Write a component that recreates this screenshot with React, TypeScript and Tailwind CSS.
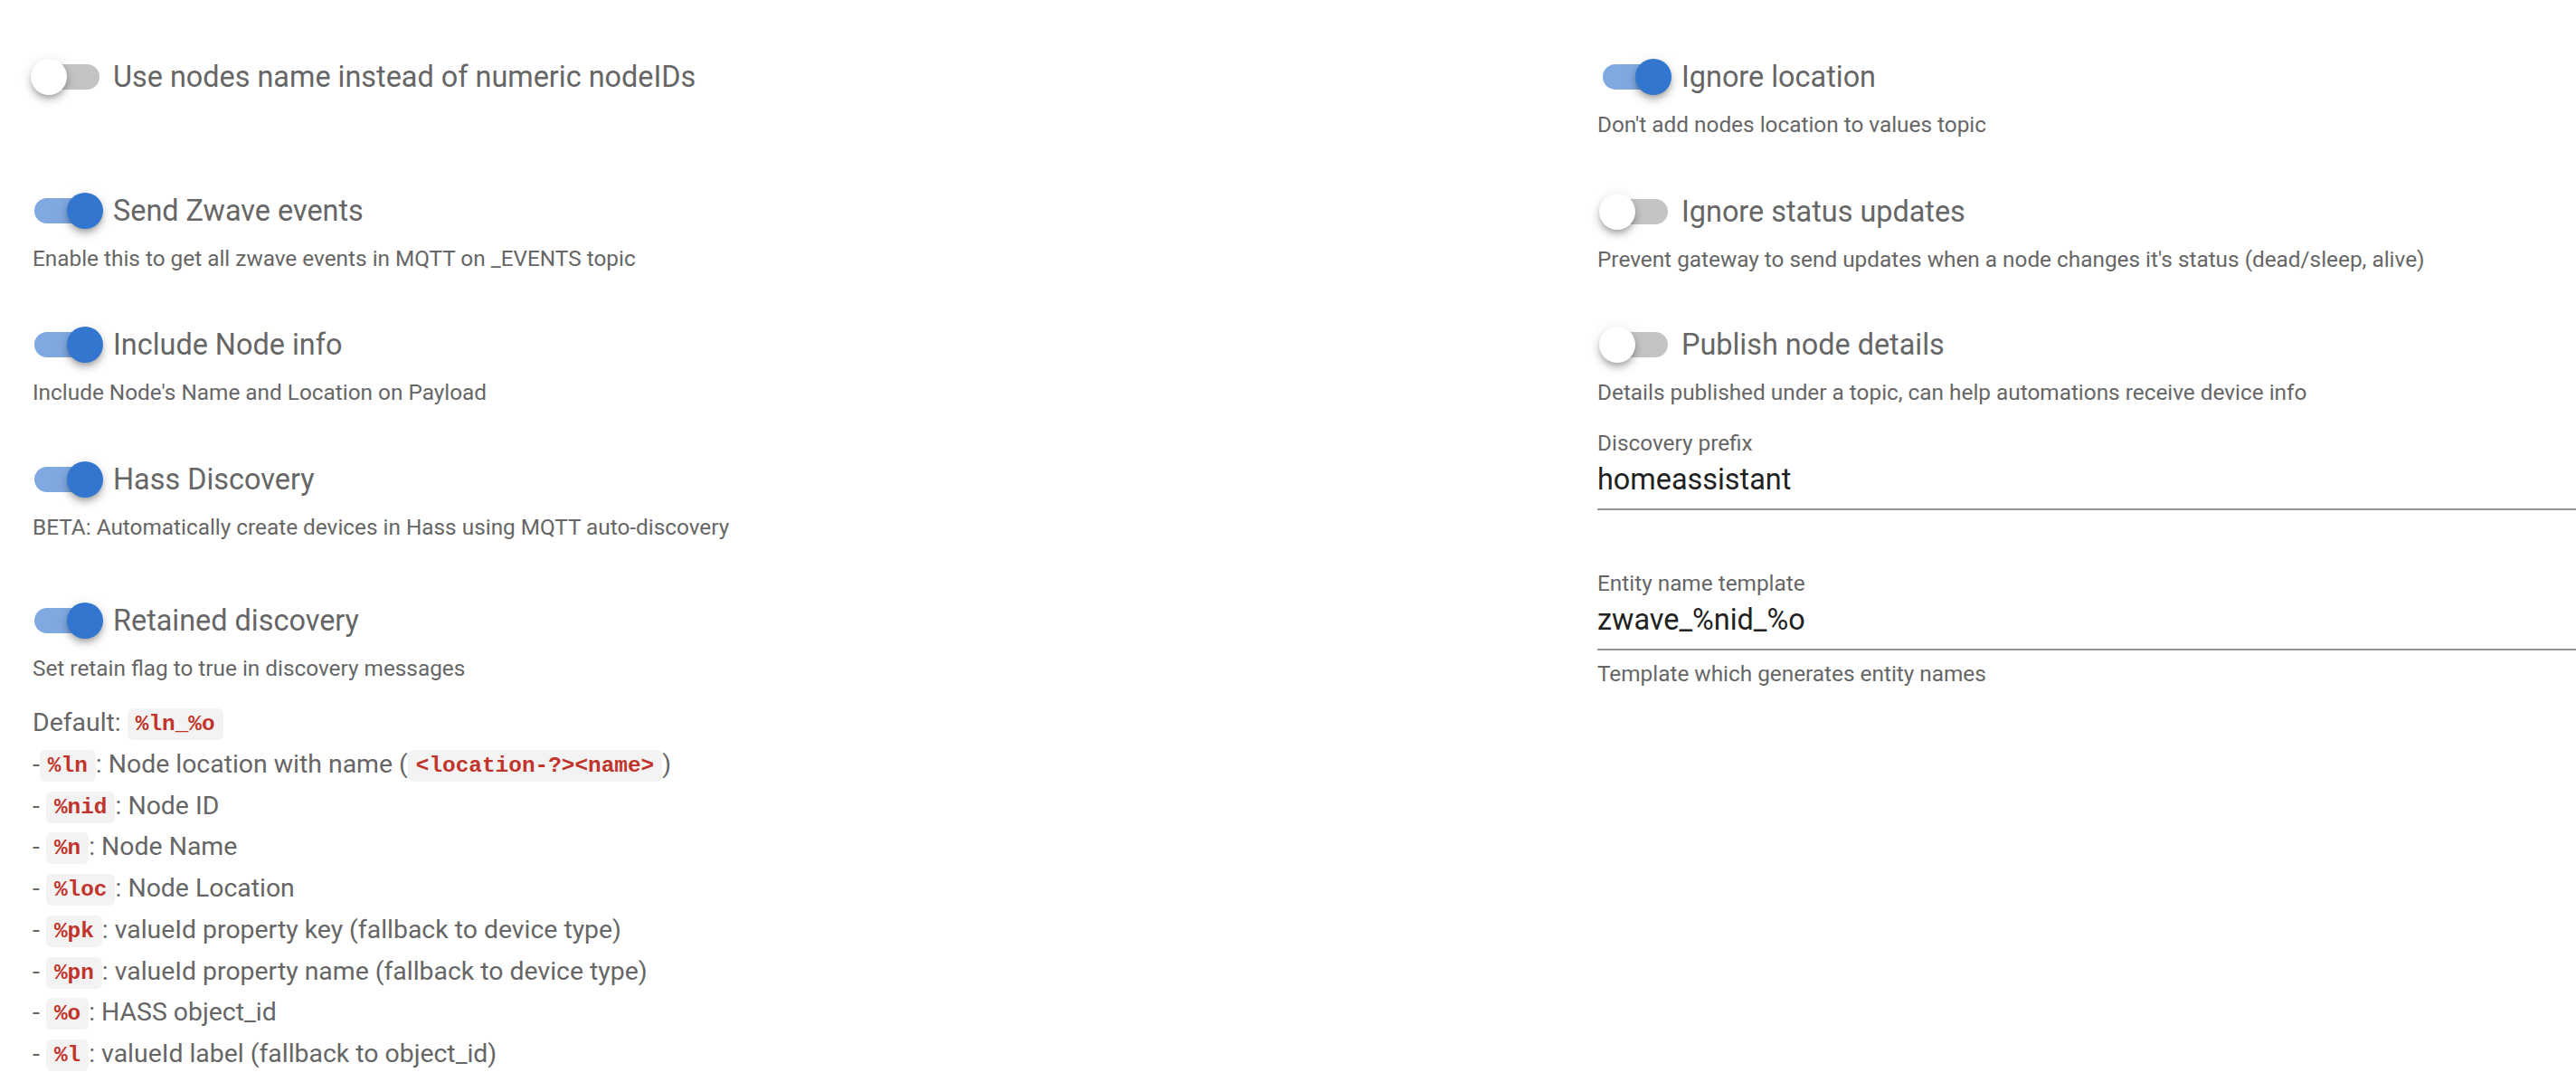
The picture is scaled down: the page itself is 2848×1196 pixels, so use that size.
import React from 'react';
import clsx from 'clsx';

const FONT = '[font-family:Roboto,"Liberation_Sans",sans-serif]';

function Toggle({ on }: { on: boolean }) {
  return (
    <div className="relative w-[80px] h-[40px] shrink-0">
      <div
        className={clsx(
          'absolute left-[4px] top-[6px] w-[72px] h-[28px] rounded-full',
          on ? 'bg-[#80a9e1]' : 'bg-[#c4c4c4]'
        )}
      />
      <div
        className={clsx(
          'absolute top-0 w-[40px] h-[40px] rounded-full shadow-[0_4px_6px_-2px_rgba(0,0,0,0.25),0_6px_10px_0_rgba(0,0,0,0.14),0_2px_14px_0_rgba(0,0,0,0.1)]',
          on ? 'left-[40px] bg-[#3276d0]' : 'left-0 bg-white'
        )}
      />
    </div>
  );
}

function SwitchRow({ on, label, className }: { on: boolean; label: string; className?: string }) {
  return (
    <div className={clsx('flex items-center h-[40px] -ml-[2px]', className)}>
      <Toggle on={on} />
      <span className="ml-[11px] text-[32.4px] leading-[40px] text-[#666666] whitespace-nowrap">{label}</span>
    </div>
  );
}

function Hint({ children }: { children: React.ReactNode }) {
  return <div className="mt-[17px] text-[24.35px] leading-[32px] text-[#666666] whitespace-nowrap">{children}</div>;
}

function Code({ children }: { children: React.ReactNode }) {
  return (
    <code className="inline-block bg-[#f3f3f3] text-[#c0342b] font-bold rounded-[6px] px-[9px] leading-[35px] text-[24.4px] align-middle [font-family:'Liberation_Mono',monospace]">
      {children}
    </code>
  );
}

const placeholders: [string, string][] = [
  ['%nid', 'Node ID'],
  ['%n', 'Node Name'],
  ['%loc', 'Node Location'],
  ['%pk', 'valueId property key (fallback to device type)'],
  ['%pn', 'valueId property name (fallback to device type)'],
  ['%o', 'HASS object_id'],
  ['%l', 'valueId label (fallback to object_id)'],
];

function Field({ label, value, className }: { label: string; value: string; className?: string }) {
  return (
    <div className={className}>
      <div className="text-[24.35px] leading-[32px] text-[#666666]">{label}</div>
      <div className="mt-[4px] text-[32.4px] leading-[40px] text-[#212121]">{value}</div>
      <div className="mt-[12px] h-[2px] bg-[#949494]" />
    </div>
  );
}

export default function App() {
  return (
    <div className={clsx('w-[2848px] h-[1196px] bg-white overflow-hidden grid grid-cols-[1730px_1fr]', FONT)}>
      <div className="pl-[36px] pt-[65px]">
        <SwitchRow on={false} label="Use nodes name instead of numeric nodeIDs" />

        <SwitchRow on label="Send Zwave events" className="mt-[108px]" />
        <Hint>Enable this to get all zwave events in MQTT on _EVENTS topic</Hint>

        <SwitchRow on label="Include Node info" className="mt-[59px]" />
        <Hint>Include Node's Name and Location on Payload</Hint>

        <SwitchRow on label="Hass Discovery" className="mt-[60px]" />
        <Hint>BETA: Automatically create devices in Hass using MQTT auto-discovery</Hint>

        <SwitchRow on label="Retained discovery" className="mt-[67px]" />
        <Hint>Set retain flag to true in discovery messages</Hint>

        <div className="mt-[21px] text-[28.4px] text-[#666666] whitespace-nowrap">
          <div className="leading-[46px]">
            Default: <Code>%ln_%o</Code>
          </div>
          <div className="leading-[45.7px]">
            -<Code>%ln</Code>: Node location with name (<Code>{'<location-?><name>'}</Code>)
          </div>
          {placeholders.map(([code, text]) => (
            <div key={code} className="leading-[45.7px]">
              - <Code>{code}</Code>: {text}
            </div>
          ))}
        </div>
      </div>

      <div className="pl-[36px] pt-[65px]">
        <SwitchRow on label="Ignore location" className="ml-[2px]" />
        <Hint>Don't add nodes location to values topic</Hint>

        <SwitchRow on={false} label="Ignore status updates" className="mt-[60px] ml-[2px]" />
        <Hint>Prevent gateway to send updates when a node changes it's status (dead/sleep, alive)</Hint>

        <SwitchRow on={false} label="Publish node details" className="mt-[58px] ml-[2px]" />
        <Hint>Details published under a topic, can help automations receive device info</Hint>

        <Field label="Discovery prefix" value="homeassistant" className="mt-[24px]" />
        <Field label="Entity name template" value="zwave_%nid_%o" className="mt-[65px]" />
        <div className="mt-[10px] text-[24.35px] leading-[32px] text-[#666666]">Template which generates entity names</div>
      </div>
    </div>
  );
}
